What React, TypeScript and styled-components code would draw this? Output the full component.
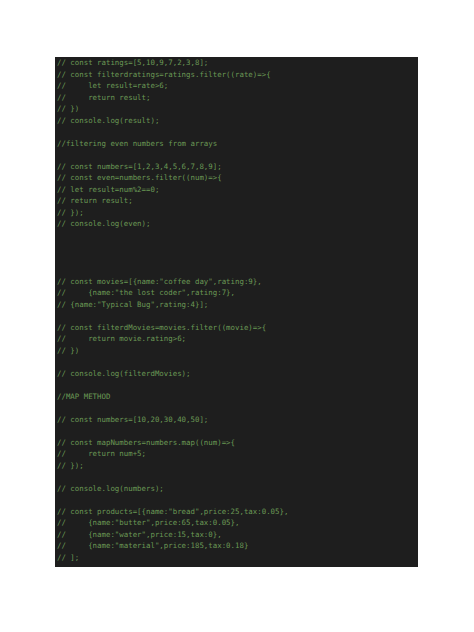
import React from "react";
import styled, { createGlobalStyle } from "styled-components";

const Global = createGlobalStyle`
  html, body { margin: 0; padding: 0; background: #ffffff; }
  body { width: 474px; height: 632px; overflow: hidden; }
`;

const Page = styled.main`
  padding: 57px 0 0 55px;
`;

const CodeBlock = styled.pre`
  margin: 0;
  width: 363px;
  height: 510px;
  box-sizing: border-box;
  padding: 0 0 0 2px;
  background: #1e1e1e;
  color: #6a9955;
  font-family: "DejaVu Sans Mono", "Liberation Mono", monospace;
  font-size: 7.4px;
  line-height: 11.51px;
  white-space: pre;
  overflow: hidden;
  display: flex;
  flex-direction: column;
`;

const Line = styled.span`
  display: block;
  height: 11.51px;
`;

const lines = [
  "// const ratings=[5,10,9,7,2,3,8];",
  "// const filterdratings=ratings.filter((rate)=>{",
  "//     let result=rate>6;",
  "//     return result;",
  "// })",
  "// console.log(result);",
  "",
  "//filtering even numbers from arrays",
  "",
  "// const numbers=[1,2,3,4,5,6,7,8,9];",
  "// const even=numbers.filter((num)=>{",
  "// let result=num%2==0;",
  "// return result;",
  "// });",
  "// console.log(even);",
  "",
  "",
  "",
  "",
  "// const movies=[{name:\"coffee day\",rating:9},",
  "//     {name:\"the lost coder\",rating:7},",
  "// {name:\"Typical Bug\",rating:4}];",
  "",
  "// const filterdMovies=movies.filter((movie)=>{",
  "//     return movie.rating>6;",
  "// })",
  "",
  "// console.log(filterdMovies);",
  "",
  "//MAP METHOD",
  "",
  "// const numbers=[10,20,30,40,50];",
  "",
  "// const mapNumbers=numbers.map((num)=>{",
  "//     return num+5;",
  "// });",
  "",
  "// console.log(numbers);",
  "",
  "// const products=[{name:\"bread\",price:25,tax:0.05},",
  "//     {name:\"butter\",price:65,tax:0.05},",
  "//     {name:\"water\",price:15,tax:0},",
  "//     {name:\"material\",price:185,tax:0.18}",
  "// ];",
];

export default function App() {
  return (
    <Page>
      <Global />
      <CodeBlock>
        {lines.map((l, i) => (
          <Line key={i}>{l}</Line>
        ))}
      </CodeBlock>
    </Page>
  );
}
